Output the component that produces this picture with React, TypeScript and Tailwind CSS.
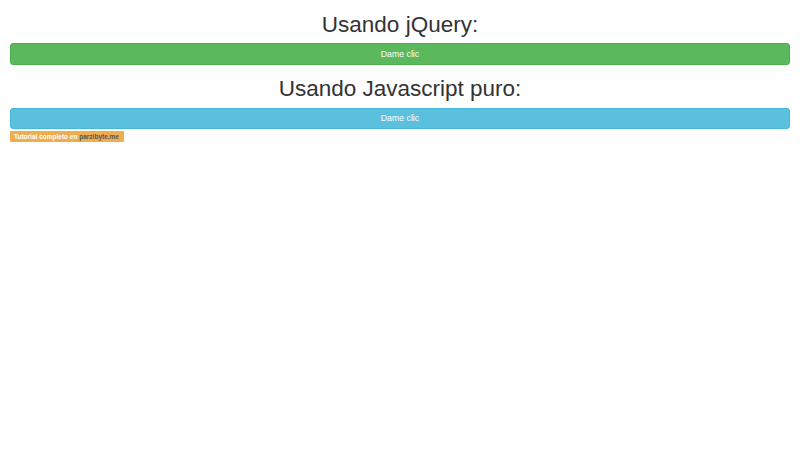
export default function App() {
  return (
    <div className="min-h-[450px] bg-white px-[10px] font-['Liberation_Sans',Arial,sans-serif] text-[#333]">
      <h1 className="mb-[6px] pt-[12.5px] text-center text-[22.5px] leading-[24.75px] font-normal">
        Usando jQuery:
      </h1>
      <button
        type="button"
        className="block h-[21.25px] w-full rounded-[3px] border border-[#4cae4c] bg-[#5cb85c] text-center text-[8.75px] leading-[12.5px] text-white"
      >
        Dame clic
      </button>
      <h1 className="mt-[12.5px] mb-[6px] text-center text-[22.5px] leading-[24.75px] font-normal">
        Usando Javascript puro:
      </h1>
      <button
        type="button"
        className="block h-[21.25px] w-full rounded-[3px] border border-[#46b8da] bg-[#5bc0de] text-center text-[8.75px] leading-[12.5px] text-white"
      >
        Dame clic
      </button>
      <div className="mt-[1.5px] block w-[114px] rounded-[1px] bg-[#f0ad4e] px-[4px] text-[6.5px] leading-[11px] font-bold text-white">
        Tutorial completo en <a className="text-[#555]">parzibyte.me</a>
      </div>
    </div>
  );
}
